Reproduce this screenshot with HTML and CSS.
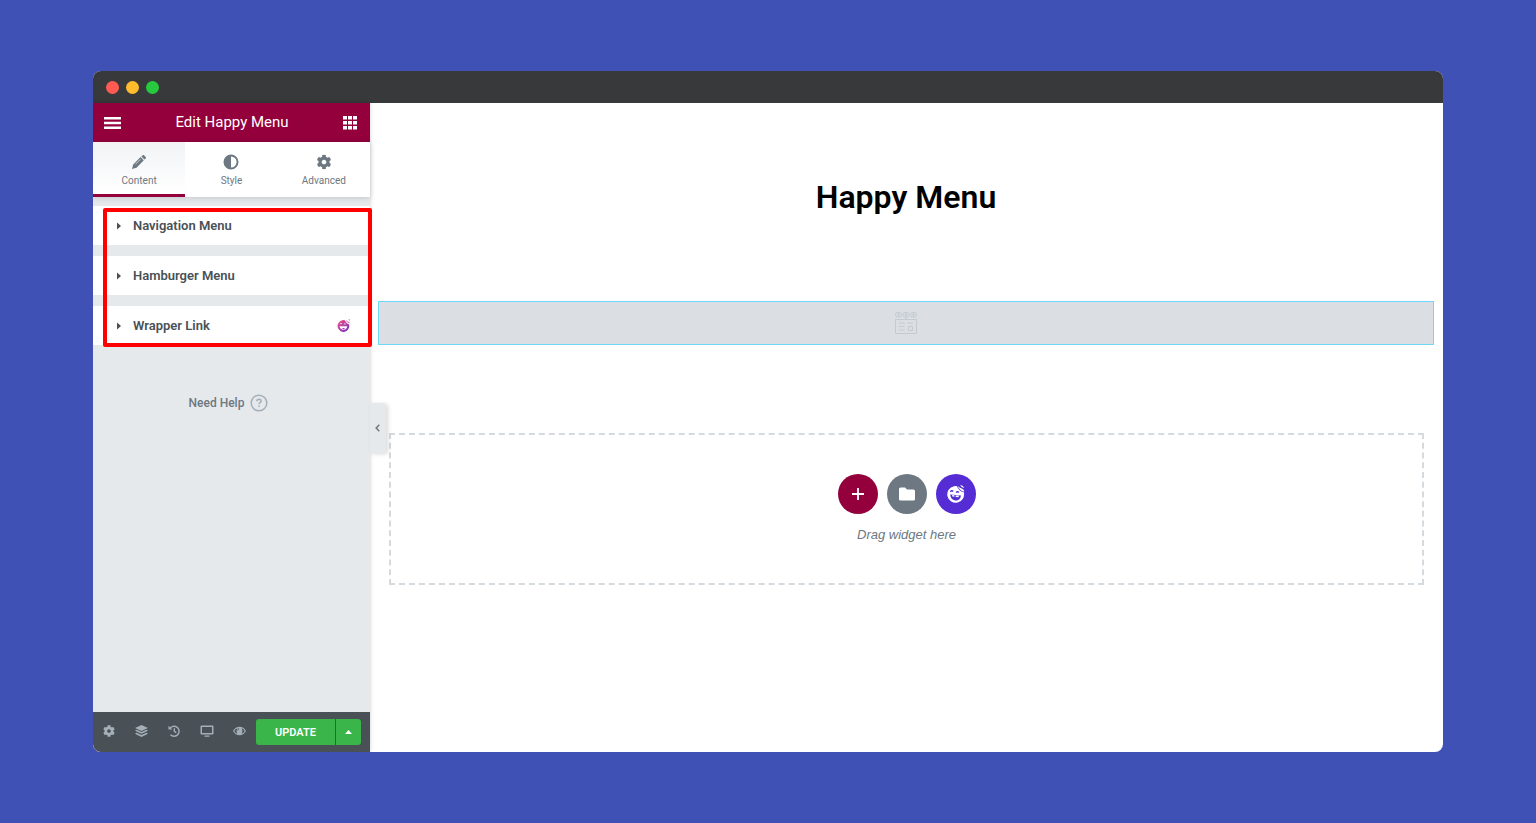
FILE: index.html
```html
<!DOCTYPE html>
<html lang="en">
  <head>
    <meta charset="UTF-8" />
    <meta name="viewport" content="width=device-width, initial-scale=1.0" />
    <title>Edit Happy Menu</title>
    <link rel="stylesheet" href="styles.css" />
  </head>
  <body>
    <!-- shared icon shapes -->
    <svg class="sprite" aria-hidden="true">
      <symbol id="cog" viewBox="0 0 512 512">
        <path d="M487.4 315.7l-42.6-24.6c4.3-23.2 4.3-47 0-70.2l42.6-24.6c4.9-2.8 7.1-8.6 5.5-14-11.1-35.6-30-67.8-54.7-94.6-3.8-4.1-10-5.1-14.8-2.3L380.8 110c-17.9-15.4-38.5-27.3-60.8-35.1V25.8c0-5.6-3.9-10.5-9.4-11.7-36.7-8.2-74.3-7.8-109.2 0-5.5 1.2-9.4 6.1-9.4 11.7V75c-22.2 7.9-42.8 19.8-60.8 35.1L88.7 85.5c-4.9-2.8-11-1.9-14.8 2.3-24.7 26.7-43.6 58.9-54.7 94.6-1.7 5.4.6 11.2 5.5 14L67.3 221c-4.3 23.2-4.3 47 0 70.2l-42.6 24.6c-4.9 2.8-7.1 8.6-5.5 14 11.1 35.6 30 67.8 54.7 94.6 3.8 4.1 10 5.1 14.8 2.3l42.6-24.6c17.9 15.4 38.5 27.3 60.8 35.1v49.2c0 5.6 3.9 10.5 9.4 11.7 36.7 8.2 74.3 7.8 109.2 0 5.5-1.2 9.4-6.1 9.4-11.7v-49.2c22.2-7.9 42.8-19.8 60.8-35.1l42.6 24.6c4.9 2.8 11 1.9 14.8-2.3 24.7-26.7 43.6-58.9 54.7-94.6 1.5-5.5-.7-11.3-5.6-14.1zM256 336c-44.1 0-80-35.9-80-80s35.9-80 80-80 80 35.9 80 80-35.9 80-80 80z" />
      </symbol>
      <symbol id="caret" viewBox="0 0 4 8">
        <path d="M0 0.5L4 4L0 7.5Z" />
      </symbol>
    </svg>

    <div class="window">
      <div class="titlebar">
        <span class="dot dot-red"></span>
        <span class="dot dot-yellow"></span>
        <span class="dot dot-green"></span>
      </div>

      <div class="editor">
        <aside class="panel">
          <header class="panel-header">
            <button class="icon-btn" aria-label="Menu">
              <svg width="17" height="12" viewBox="0 0 17 12"><path d="M0 0h17v2.500H0zM0 4.800h17v2.400H0zM0 9.500h17V12H0z" /></svg>
            </button>
            <h1 class="panel-title">Edit Happy Menu</h1>
            <button class="icon-btn" aria-label="Widgets">
              <svg width="14" height="14" viewBox="0 0 14 14"><path d="M0 0h4v3.500H0zM5 0h4v3.500H5zM10 0h4v3.500h-4zM0 5h4v3.500H0zM5 5h4v3.500H5zM10 5h4v3.500h-4zM0 10h4v3.500H0zM5 10h4v3.500H5zM10 10h4v3.500h-4z" /></svg>
            </button>
          </header>

          <nav class="tabs">
            <button class="tab tab-active">
              <svg width="16" height="16" viewBox="0 0 16 16"><path d="M10.400 2.400L11.600 1.200Q12.300 .7 13 1.300L14.700 3Q15.300 3.700 14.700 4.400L13.500 5.500ZM9.600 3.100L12.800 6.300L5.500 13.700L1 15L2.200 10.500Z" /><path d="M9.400 5.300L4.400 10.300" stroke="#f7f8f9" stroke-width=".7" /></svg>
              Content
            </button>
            <button class="tab">
              <svg width="16" height="16" viewBox="0 0 16 16"><path fill-rule="evenodd" d="M8 .5a7.500 7.500 0 1 0 0 15a7.500 7.500 0 0 0 0-15zM8 2.400a5.600 5.600 0 0 1 0 11.200z" /></svg>
              Style
            </button>
            <button class="tab">
              <svg width="16" height="16" viewBox="-20 -20 552 552"><use href="#cog" width="512" height="512" /></svg>
              Advanced
            </button>
          </nav>

          <div class="sections">
            <button class="section">
              <svg class="caret" width="4" height="8"><use href="#caret" /></svg>
              Navigation Menu
            </button>
            <button class="section">
              <svg class="caret" width="4" height="8"><use href="#caret" /></svg>
              Hamburger Menu
            </button>
            <button class="section">
              <svg class="caret" width="4" height="8"><use href="#caret" /></svg>
              Wrapper Link
              <svg class="happy" width="13" height="13" viewBox="0 0 20 20">
                <defs>
                  <linearGradient id="happy-fill" x1="0" y1="0" x2="1" y2="1">
                    <stop offset="0.15" stop-color="#e2498a" />
                    <stop offset="1" stop-color="#6a35cc" />
                  </linearGradient>
                </defs>
                <path fill="url(#happy-fill)" d="M12 2Q10 1.400 8 2A9 9 0 1 0 18.600 8.500Q14 7 12 2z" />
                <path fill="#d96aa8" d="M13.500 1Q14 4.500 16.500 5.500L19.500 6.800L19 4.500L16.500 3.800zM17 1L20 2.500V.5z" />
                <path d="M3.800 11H15.800Q14.800 16.500 10 16.500Q5 16 3.800 11z" fill="#fff" />
                <path d="M7.500 14.800Q10 13 12.500 14.800Q10 17 7.500 14.800z" fill="#9a39ae" />
                <path d="M4.500 8Q6 5.800 7.600 7.500M10.500 8Q12 6.500 13.500 8" fill="none" stroke="#fff" stroke-width="1.300" />
              </svg>
            </button>
            <div class="highlight"></div>
          </div>

          <a class="help" href="#">
            Need Help
            <svg width="18" height="18" viewBox="0 0 18 18" fill="none" stroke="#a4afb7"><circle cx="9" cy="9" r="7.800" stroke-width="1.500" /><path d="M6.800 7.300Q6.900 5.300 9 5.300Q11.200 5.400 11.100 7.100Q11 8.200 9.700 8.800Q9 9.200 9 10.300M9 11.500V13" stroke-width="1.500" /></svg>
          </a>

          <footer class="panel-footer">
            <button class="tool" aria-label="Settings">
              <svg width="12" height="12"><use href="#cog" /></svg>
            </button>
            <button class="tool" aria-label="Navigator">
              <svg width="13" height="12" viewBox="0 0 13 12"><path d="M6.500 0L13 3L6.500 6L0 3ZM1.600 4.800L6.500 7.100L11.400 4.800L13 5.700L6.500 8.800L0 5.700ZM1.600 7.800L6.500 10.100L11.400 7.800L13 8.700L6.500 12L0 8.700Z" /></svg>
            </button>
            <button class="tool" aria-label="History">
              <svg width="12" height="12" viewBox="0 0 12 12" fill="none" stroke="currentColor"><path d="M1.700 3.800A5 5 0 1 1 2.500 9.700M6.300 3.200V6.300L8.300 7.600" stroke-width="1.400" /><path d="M.5 .8V4.600H4.300Z" fill="currentColor" stroke="none" /></svg>
            </button>
            <button class="tool" aria-label="Responsive Mode">
              <svg width="14" height="12" viewBox="0 0 14 12"><path fill-rule="evenodd" d="M1.500 .5h11Q13.500 .5 13.500 1.500V8.500Q13.500 9.500 12.500 9.500H1.500Q.5 9.500 .5 8.500V1.500Q.5 .5 1.500 .5zM2 2V8H12V2zM4.500 10.500h5v1.200h-5z" /></svg>
            </button>
            <button class="tool" aria-label="Preview Changes">
              <svg width="13" height="10" viewBox="0 0 13 10"><path fill-rule="evenodd" d="M0 5Q2.500 .8 6.500 .8T13 5Q10.500 9.200 6.500 9.200T0 5zM1.300 5Q2.300 7 4.300 7.800Q2.500 5 4.300 2.200Q2.300 3 1.300 5zM11.700 5Q10.700 3 8.700 2.200Q10.500 5 8.700 7.800Q10.700 7 11.700 5zM6 2.300A2 2 0 0 0 4.400 4.300L5.200 4.500A1.300 1.300 0 0 1 6.300 3.100z" /></svg>
            </button>
            <div class="publish">
              <button class="update">UPDATE</button>
              <button class="update-more" aria-label="Save Options">
                <svg width="7" height="4" viewBox="0 0 7 4"><path d="M0 4L3.500 0L7 4Z" /></svg>
              </button>
            </div>
          </footer>
        </aside>

        <main class="preview">
          <button class="collapse" aria-label="Hide Panel">
            <svg width="5" height="8" viewBox="0 0 5 8" fill="none" stroke="#6d7882" stroke-width="1.500"><path d="M4.300 .8L1.200 4L4.300 7.200" /></svg>
          </button>
          <h2 class="page-title">Happy Menu</h2>

          <div class="widget">
            <svg width="24" height="24" viewBox="0 0 24 24" fill="none" stroke="#c3cad0">
              <path d="M1.500 8.500h21v14h-21zM5 12h5.500M5 15.500h5.500M5 19h5.500M13.500 12H19M14.500 15.500h4v4h-4zM12 6v2.500" />
              <rect x="1.500" y="1.500" width="6" height="4.500" rx="2" />
              <rect x="9" y="1.500" width="6" height="4.500" rx="2" />
              <rect x="16.500" y="1.500" width="6" height="4.500" rx="2" />
              <path d="M4.500 2V6M12 2V6M19.500 2V6M3 3.700h3M10.500 3.700h3M18 3.700h3" />
            </svg>
          </div>

          <div class="dropzone">
            <div class="actions">
              <button class="round round-add" aria-label="Add New Section">
                <svg width="12" height="12" viewBox="0 0 12 12"><path d="M5.100 0h1.800v5.100H12v1.800H6.900V12H5.100V6.900H0V5.100h5.100z" /></svg>
              </button>
              <button class="round round-folder" aria-label="Add Template">
                <svg width="16" height="14" viewBox="0 0 16 14"><path d="M1.500 .5H6L8 2.500H14.500Q16 2.500 16 4V12Q16 13.500 14.500 13.500H1.500Q0 13.500 0 12V2Q0 .5 1.500 .5z" /></svg>
              </button>
              <button class="round round-happy" aria-label="Happy Templates">
                <svg width="20" height="20" viewBox="0 0 20 20">
                  <path d="M11 2.200Q9.500 1.700 8 2.200A8.400 8.400 0 1 0 17.800 8.300Q12.800 7 11 2.200z" />
                  <path d="M11.700 1.800Q13 6.500 18.300 7.800Q18.200 5.500 15.800 4.500Q13.200 3.800 11.700 1.800zM14 .8Q15 3.500 18.300 4Q17.500 1.800 14 .8z" />
                  <path d="M4.200 10.500L15 11.500Q14 17 9.200 16.500Q4.500 15.500 4.200 10.500z" fill="#562dd4" />
                  <path d="M6 11L8.400 11.200V12.800L6.400 12.500zM9.500 11.400L13 11.600L12.500 13.300L9.800 13z" />
                  <path d="M4.300 7.800Q5.700 5.900 7.200 7.400M10.200 8.500Q11.400 7.100 12.800 8.600" fill="none" stroke="#562dd4" stroke-width="1.500" />
                </svg>
              </button>
            </div>
            <p class="drag-text">Drag widget here</p>
          </div>
        </main>
      </div>
    </div>
  </body>
</html>
```

FILE: styles.css
```css
* {
  box-sizing: border-box;
}

body {
  margin: 0;
  min-height: 100vh;
  padding: 71px 93px;
  display: flex;
  background-color: #3f51b5;
  font-family: Roboto, "Liberation Sans", sans-serif;
}

button {
  padding: 0;
  border: 0;
  background: none;
  font-family: inherit;
  color: inherit;
  cursor: pointer;
}

svg {
  display: block;
  flex: none;
  fill: currentColor;
}

svg[fill="none"] {
  fill: none;
}

.sprite {
  position: absolute;
  width: 0;
  height: 0;
}

/* browser window */
.window {
  flex: 1;
  display: flex;
  flex-direction: column;
  border-radius: 8px;
  overflow: hidden;
  background-color: #fff;
}

.titlebar {
  display: flex;
  align-items: center;
  gap: 7px;
  height: 32px;
  padding: 1px 13px 0;
  background-color: #37393b;
}

.dot {
  width: 13px;
  height: 13px;
  border-radius: 50%;
}

.dot-red {
  background-color: #ff5b52;
}

.dot-yellow {
  background-color: #febb2e;
}

.dot-green {
  background-color: #27c93f;
}

.editor {
  flex: 1;
  display: flex;
}

/* left panel */
.panel {
  width: 277px;
  display: flex;
  flex-direction: column;
  background-color: #e6e9ec;
  box-shadow: 0 0 4px rgba(0, 0, 0, 0.2);
}

.panel-header {
  display: flex;
  align-items: center;
  justify-content: space-between;
  height: 39px;
  padding: 0 13px 0 11px;
  background-color: #93003c;
  color: #fff;
}

.panel-title {
  margin: 0;
  padding-bottom: 2px;
  font-size: 15px;
  font-weight: 400;
}

.tabs {
  display: flex;
  height: 55px;
  background-color: #fff;
  box-shadow: 0 1px 6px rgba(0, 0, 0, 0.15);
}

.tab {
  flex: 1;
  display: flex;
  flex-direction: column;
  align-items: center;
  justify-content: center;
  gap: 5px;
  padding-top: 5px;
  border-bottom: 3px solid transparent;
  font-size: 10px;
  line-height: 12px;
  color: #6d7882;
}

.tab-active {
  border-bottom-color: #93003c;
  background: linear-gradient(#f1f3f5, #fff);
}

.sections {
  position: relative;
  display: flex;
  flex-direction: column;
  gap: 11px;
  margin-top: 9px;
}

.section {
  display: flex;
  align-items: center;
  height: 39px;
  padding: 0 20px 0 24px;
  background-color: #fff;
  font-size: 13px;
  font-weight: 600;
  color: #495157;
}

.caret {
  margin-right: 12px;
}

.happy {
  margin-left: auto;
}

/* red frame over the section list */
.highlight {
  position: absolute;
  top: 2px;
  right: -2px;
  bottom: -2px;
  left: 10px;
  border: 4px solid #f00;
  border-radius: 2px;
  z-index: 2;
  pointer-events: none;
}

.help {
  display: flex;
  align-items: center;
  align-self: center;
  gap: 6px;
  margin: 49px 6px 0 0;
  font-size: 12px;
  font-weight: 500;
  color: #6d7882;
  text-decoration: none;
}

.panel-footer {
  display: flex;
  align-items: center;
  height: 40px;
  margin-top: auto;
  padding-right: 9px;
  background-color: #495157;
}

.tool {
  flex: 1;
  display: flex;
  justify-content: center;
  padding-bottom: 2px;
  color: #a4afb7;
}

.publish {
  display: flex;
  gap: 1px;
  height: 26px;
  border-radius: 3px;
  overflow: hidden;
  color: #fff;
}

.update {
  width: 79px;
  background-color: #39b54a;
  font-size: 11px;
  font-weight: 600;
}

.update-more {
  display: flex;
  align-items: center;
  justify-content: center;
  width: 25px;
  background-color: #39b54a;
}

/* page preview */
.preview {
  position: relative;
  flex: 1;
  padding: 75px 9px 0 8px;
}

.collapse {
  position: absolute;
  top: 300px;
  left: 0;
  display: flex;
  align-items: center;
  justify-content: center;
  width: 16px;
  height: 50px;
  padding-right: 2px;
  border-radius: 0 3px 3px 0;
  background-color: #e6e9ec;
  box-shadow: 2px 1px 4px rgba(0, 0, 0, 0.15);
}

.page-title {
  margin: 0 0 85px;
  text-align: center;
  font-size: 32px;
  line-height: 38px;
  font-weight: 600;
  color: #000;
}

.widget {
  display: flex;
  align-items: center;
  justify-content: center;
  height: 44px;
  border: 1px solid #71d7f7;
  background-color: #dbdfe3;
}

.dropzone {
  display: flex;
  flex-direction: column;
  align-items: center;
  margin: 88px 10px 0 11px;
  padding: 39px 0;
  border: 2px dashed #d5dadf;
}

.actions {
  display: flex;
  gap: 9px;
}

.round {
  display: flex;
  align-items: center;
  justify-content: center;
  width: 40px;
  height: 40px;
  border-radius: 50%;
  color: #fff;
}

.round-add {
  background-color: #93003c;
}

.round-folder {
  background-color: #6d7882;
}

.round-happy {
  background-color: #562dd4;
}

.drag-text {
  margin: 12px 0 0;
  font-family: "Liberation Sans", Arial, sans-serif;
  font-size: 13px;
  line-height: 18px;
  font-style: italic;
  color: #6d7882;
}
```
